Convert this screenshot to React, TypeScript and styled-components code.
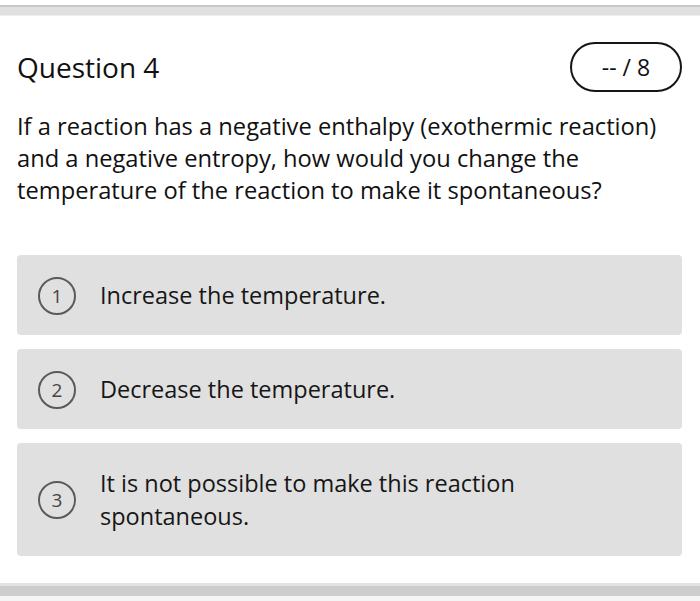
import styled, { createGlobalStyle } from "styled-components";

const GlobalStyle = createGlobalStyle`
  html, body {
    margin: 0;
    padding: 0;
    background: #ffffff;
  }
  body {
    font-family: "Open Sans", "Noto Sans", sans-serif;
    color: #141414;
  }
`;

const options = [
  "Increase the temperature.",
  "Decrease the temperature.",
  "It is not possible to make this reaction spontaneous.",
];

function App() {
  return (
    <StPage>
      <GlobalStyle />
      <StTopBar />
      <StContent>
        <StHeader>
          <StTitle>Question 4</StTitle>
          <StScore>-- / 8</StScore>
        </StHeader>
        <StPrompt>
          If a reaction has a negative enthalpy (exothermic reaction) and a
          negative entropy, how would you change the temperature of the
          reaction to make it spontaneous?
        </StPrompt>
        <StOptionList>
          {options.map((text, i) => (
            <StOption key={i}>
              <StBadge>{i + 1}</StBadge>
              <StOptionText>{text}</StOptionText>
            </StOption>
          ))}
        </StOptionList>
      </StContent>
      <StBottomBar />
    </StPage>
  );
}

export default App;

const StPage = styled.div`
  width: 700px;
  height: 601px;
  display: flex;
  flex-direction: column;
  overflow: hidden;
`;

const StTopBar = styled.div`
  margin-top: 5px;
  height: 8px;
  background: #e0e0e0;
  border-top: 2px solid #c9c9c9;
  border-bottom: 1px solid #eeeeee;
`;

const StContent = styled.div`
  display: flex;
  flex-direction: column;
  padding: 26px 18px 27px 17px;
`;

const StHeader = styled.div`
  display: flex;
  align-items: center;
  justify-content: space-between;
`;

const StTitle = styled.h2`
  margin: 0;
  font-size: 28px;
  font-weight: 400;
  line-height: 40px;
  color: #111111;
`;

const StScore = styled.div`
  box-sizing: border-box;
  width: 112px;
  height: 50px;
  border: 2px solid #151515;
  border-radius: 25px;
  display: flex;
  align-items: center;
  justify-content: center;
  font-size: 23px;
  color: #111111;
`;

const StPrompt = styled.p`
  margin: 18px 0 0;
  font-size: 23.7px;
  line-height: 32px;
  color: #111111;
`;

const StOptionList = styled.div`
  display: flex;
  flex-direction: column;
  gap: 14px;
  margin-top: 49px;
`;

const StOption = styled.div`
  display: flex;
  align-items: center;
  gap: 24px;
  padding: 24px 20px 23px 21px;
  background: #e0e0e0;
  border-radius: 4px;
`;

const StBadge = styled.span`
  box-sizing: border-box;
  flex: none;
  width: 38px;
  height: 38px;
  margin: -3px 0;
  border: 2px solid #5a5a5a;
  border-radius: 50%;
  display: flex;
  align-items: center;
  justify-content: center;
  font-size: 19px;
  color: #444444;
`;

const StOptionText = styled.span`
  max-width: 450px;
  font-size: 23.5px;
  line-height: 33px;
  color: #161616;
`;

const StBottomBar = styled.div`
  height: 10px;
  background: #cdcdcd;
  border-top: 3px solid #e2e2e2;
  border-bottom: 5px solid #f4f4f4;
`;
